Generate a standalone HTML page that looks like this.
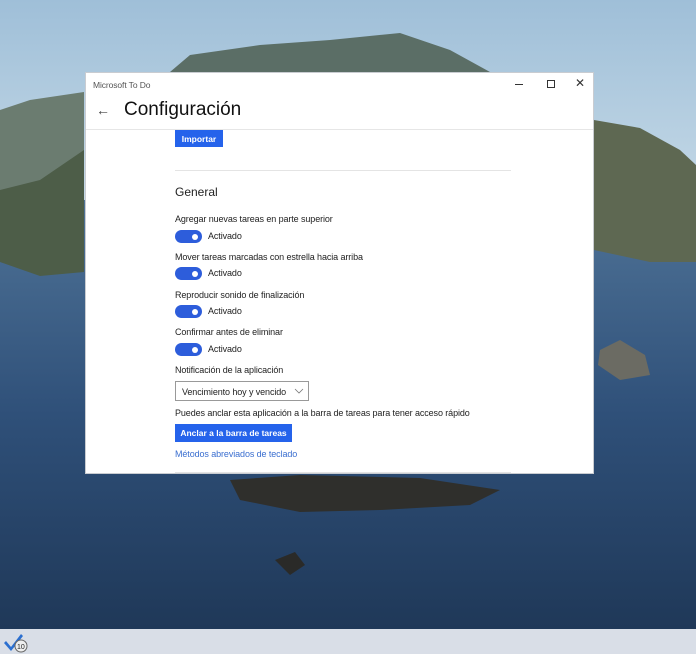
<!DOCTYPE html>
<html><head><meta charset="utf-8"><style>
*{margin:0;padding:0;box-sizing:border-box}
body{width:696px;height:654px;overflow:hidden;position:relative;font-family:"Liberation Sans",sans-serif;background:#2d4b70}
.abs{position:absolute}
#win{left:85px;top:72px;width:509px;height:402px;background:#fff;border:1px solid #c9ccd1}
.t{position:absolute;font-size:9px;letter-spacing:-0.1px;color:#222;white-space:nowrap}
.tg{position:absolute;left:89px;width:27px;height:13px;border-radius:7px;background:#2d5ddb}
.tg::after{content:"";position:absolute;right:4px;top:3.5px;width:6px;height:6px;border-radius:50%;background:#fff}
.btn{position:absolute;background:#2563eb;color:#fff;font-size:8.5px;font-weight:bold;display:flex;align-items:center;justify-content:center;white-space:nowrap}
</style></head><body>
<svg class="abs" style="left:0;top:0" width="696" height="654">
<defs><linearGradient id="sky" x1="0" y1="0" x2="0" y2="1"><stop offset="0" stop-color="#9fbfd8"/><stop offset="1" stop-color="#c8dbe8"/></linearGradient>
<linearGradient id="sea" x1="0" y1="0" x2="0" y2="1"><stop offset="0" stop-color="#4f7397"/><stop offset="0.5" stop-color="#2f5079"/><stop offset="1" stop-color="#1f3858"/></linearGradient></defs>
<rect width="696" height="220" fill="url(#sky)"/>
<rect y="200" width="696" height="430" fill="url(#sea)"/>
<path d="M170 72 L190 55 L260 45 L330 40 L400 33 L450 50 L490 72Z" fill="#5b6e66"/>
<path d="M0 110 L30 100 L84 92 L84 200 L40 195 L0 200Z" fill="#6b7c70"/>
<path d="M0 190 L40 180 L84 150 L84 272 L40 276 L0 262Z" fill="#4d5d48"/>
<path d="M594 120 L640 128 L680 150 L696 165 L696 262 L650 262 L594 250Z" fill="#5e6852"/>
<path d="M600 350 L620 340 L645 355 L650 375 L620 380 L598 365Z" fill="#6b6b63"/>
<path d="M230 480 L300 475 L420 478 L500 490 L470 505 L380 510 L300 512 L240 500Z" fill="#2f2f2c"/>
<path d="M275 560 L295 552 L305 565 L290 575Z" fill="#2a2a28"/>
<rect y="629" width="696" height="25" fill="#d9dee7"/>
<path d="M6 641 L11 647 L21 634 L23 636 L11 651 L4 643Z" fill="#2b6fd0"/>
<circle cx="21" cy="646" r="6" fill="#eee" stroke="#666" stroke-width="1"/>
<text x="17" y="649" font-size="7" font-family="Liberation Sans" fill="#222">10</text>
</svg>
<div id="win" class="abs">
<div class="t" style="left:7px;top:7px;font-size:8.5px;color:#555">Microsoft To Do</div>
<div class="abs" style="left:429px;top:11px;width:8px;height:1px;background:#333"></div>
<div class="abs" style="left:461px;top:7px;width:8px;height:8px;border:1px solid #333"></div>
<div class="t" style="left:489px;top:3px;font-size:12px;color:#333">✕</div>
<div class="t" style="left:10px;top:29px;font-size:14px;color:#444">←</div>
<div class="t" style="left:38px;top:26px;font-size:19px;color:#111;letter-spacing:0">Configuración</div>
<div class="abs" style="left:0;top:56px;width:507px;height:1px;background:#e6e6e6"></div>
<div class="btn" style="left:89px;top:57px;width:48px;height:17px">Importar</div>
<div class="abs" style="left:89px;top:97px;width:336px;height:1px;background:#e4e4e4"></div>
<div class="t" style="left:89px;top:112px;font-size:12px;color:#222;letter-spacing:0">General</div>
<div class="t" style="left:89px;top:141px">Agregar nuevas tareas en parte superior</div>
<div class="tg" style="top:157px"></div><div class="t" style="left:122px;top:158px">Activado</div>
<div class="t" style="left:89px;top:179px">Mover tareas marcadas con estrella hacia arriba</div>
<div class="tg" style="top:194px"></div><div class="t" style="left:122px;top:195px">Activado</div>
<div class="t" style="left:89px;top:217px">Reproducir sonido de finalización</div>
<div class="tg" style="top:232px"></div><div class="t" style="left:122px;top:233px">Activado</div>
<div class="t" style="left:89px;top:254px">Confirmar antes de eliminar</div>
<div class="tg" style="top:270px"></div><div class="t" style="left:122px;top:271px">Activado</div>
<div class="t" style="left:89px;top:292px">Notificación de la aplicación</div>
<div class="abs" style="left:89px;top:308px;width:134px;height:20px;border:1px solid #999"></div>
<div class="t" style="left:96px;top:314px">Vencimiento hoy y vencido</div>
<svg class="abs" style="left:208px;top:315px" width="10" height="6"><path d="M1 1 L5 5 L9 1" fill="none" stroke="#777" stroke-width="0.8"/></svg>
<div class="t" style="left:89px;top:335px">Puedes anclar esta aplicación a la barra de tareas para tener acceso rápido</div>
<div class="btn" style="left:89px;top:351px;width:117px;height:18px">Anclar a la barra de tareas</div>
<div class="t" style="left:89px;top:376px;color:#3b6fd0">Métodos abreviados de teclado</div>
<div class="abs" style="left:89px;top:399px;width:336px;height:1px;background:#e4e4e4"></div>
</div>
</body></html>
